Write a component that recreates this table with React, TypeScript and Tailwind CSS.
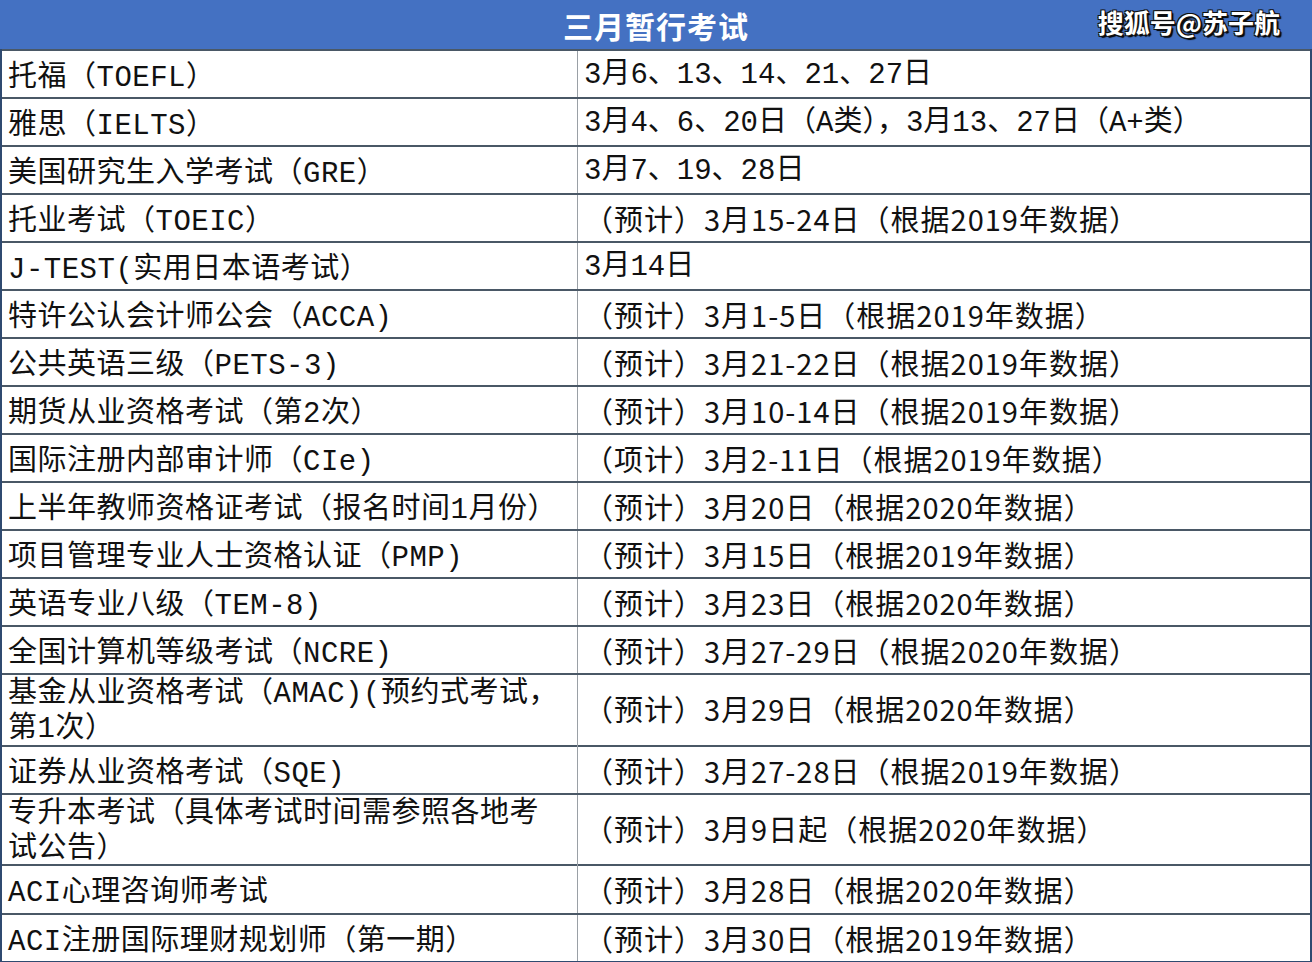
const MONO = "font-['Liberation_Mono','Noto_Sans_CJK_SC',monospace]";
const SANS = "font-['Noto_Sans_CJK_SC',sans-serif]";

type Row = {
  name: React.ReactNode;
  date: string;
  h: string;
  monoDate?: boolean;
  tall?: boolean;
};

const rows: Row[] = [
  { name: "托福（TOEFL）", date: "3月6、13、14、21、27日", h: "h-[48px]", monoDate: true },
  { name: "雅思（IELTS）", date: "3月4、6、20日（A类），3月13、27日（A+类）", h: "h-[48px]", monoDate: true },
  { name: "美国研究生入学考试（GRE）", date: "3月7、19、28日", h: "h-[48px]", monoDate: true },
  { name: "托业考试（TOEIC）", date: "（预计）3月15-24日（根据2019年数据）", h: "h-[48px]" },
  { name: "J-TEST(实用日本语考试）", date: "3月14日", h: "h-[48px]", monoDate: true },
  { name: "特许公认会计师公会（ACCA)", date: "（预计）3月1-5日（根据2019年数据）", h: "h-[48px]" },
  { name: "公共英语三级（PETS-3)", date: "（预计）3月21-22日（根据2019年数据）", h: "h-[48px]" },
  { name: "期货从业资格考试（第2次）", date: "（预计）3月10-14日（根据2019年数据）", h: "h-[48px]" },
  { name: "国际注册内部审计师（CIe)", date: "（项计）3月2-11日（根据2019年数据）", h: "h-[48px]" },
  { name: "上半年教师资格证考试（报名时间1月份）", date: "（预计）3月20日（根据2020年数据）", h: "h-[48px]" },
  { name: "项目管理专业人士资格认证（PMP)", date: "（预计）3月15日（根据2019年数据）", h: "h-[48px]" },
  { name: "英语专业八级（TEM-8)", date: "（预计）3月23日（根据2020年数据）", h: "h-[48px]" },
  { name: "全国计算机等级考试（NCRE)", date: "（预计）3月27-29日（根据2020年数据）", h: "h-[48px]" },
  {
    name: (
      <>
        基金从业资格考试（AMAC)(预约式考试，
        <br />
        第1次）
      </>
    ),
    date: "（预计）3月29日（根据2020年数据）",
    h: "h-[72px]",
    tall: true,
  },
  { name: "证券从业资格考试（SQE)", date: "（预计）3月27-28日（根据2019年数据）", h: "h-[48px]" },
  {
    name: (
      <>
        专升本考试（具体考试时间需参照各地考
        <br />
        试公告）
      </>
    ),
    date: "（预计）3月9日起（根据2020年数据）",
    h: "h-[71px]",
    tall: true,
  },
  { name: "ACI心理咨询师考试", date: "（预计）3月28日（根据2020年数据）", h: "h-[49px]" },
  { name: "ACI注册国际理财规划师（第一期）", date: "（预计）3月30日（根据2019年数据）", h: "h-[48px]" },
];

export default function App() {
  return (
    <div className="w-[1312px] h-[962px] bg-white overflow-hidden">
      {/* Title bar */}
      <div className="relative h-[49px] bg-[#4471c2] flex items-center justify-center">
        <h1 className={`${SANS} text-[30px] font-bold text-white tracking-[1px] leading-none`}>
          三月暂行考试
        </h1>
        <span
          className={`${SANS} absolute right-[32px] top-[9px] text-[26px] font-bold text-white leading-none [text-shadow:1px_1px_0_#111,-1px_-1px_0_#111,1px_-1px_0_#111,-1px_1px_0_#111,2px_2px_1px_#000]`}
        >
          搜狐号@苏子航
        </span>
      </div>

      {/* Exam rows */}
      <div className="border-l-2 border-r-2 border-b border-[#2f4a70]">
        {rows.map((r, i) => (
          <div
            key={i}
            className={`grid grid-cols-[576px_1fr] ${r.h} border-t-2 border-[#4a5866] text-[29px] text-[#111]`}
          >
            <div
              className={`${MONO} ${r.tall ? "pt-[2px]" : "pt-[8px]"} flex items-center pl-[6px] border-r border-[#9aa0a6] leading-[35px] tracking-[0.5px] whitespace-nowrap`}
            >
              <span>{r.name}</span>
            </div>
            <div
              className={`${r.monoDate ? MONO + " pt-[2px]" : SANS + " tracking-[1px]"} ${r.tall ? "pb-[6px]" : ""} flex items-center pl-[6px] leading-none whitespace-nowrap`}
            >
              {r.date}
            </div>
          </div>
        ))}
      </div>
    </div>
  );
}
